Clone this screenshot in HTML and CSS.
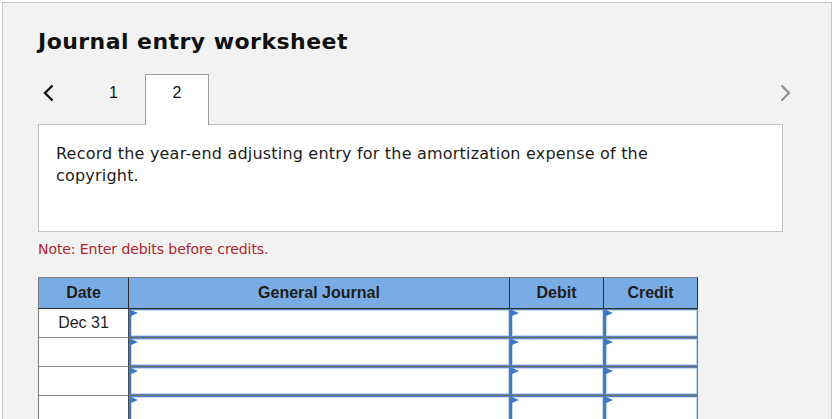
FILE: index.html
```html
<!DOCTYPE html>
<html>
<head>
<meta charset="utf-8">
<title>Journal entry worksheet</title>
<link rel="stylesheet" href="styles.css">
</head>
<body>
<div class="frame">
  <h1 class="title">Journal entry worksheet</h1>
  <div class="tabs">
    <div class="nav-prev">
      <svg width="12" height="18" viewBox="0 0 12 18"><path d="M10.5 1.5 L3 9 L10.5 16.5" fill="none" stroke="#111" stroke-width="2.4"/></svg>
    </div>
    <div class="tab">1</div>
    <div class="tab active">2</div>
    <div class="nav-next">
      <svg width="12" height="18" viewBox="0 0 12 18"><path d="M1.5 1.5 L9 9 L1.5 16.5" fill="none" stroke="#8a8a8a" stroke-width="2"/></svg>
    </div>
  </div>
  <div class="question">
    <p>Record the year-end adjusting entry for the amortization expense of the copyright.</p>
  </div>
  <div class="note">Note: Enter debits before credits.</div>
  <table class="journal">
    <thead>
      <tr>
        <th class="c-date">Date</th>
        <th class="c-gj">General Journal</th>
        <th class="c-dr">Debit</th>
        <th class="c-cr">Credit</th>
      </tr>
    </thead>
    <tbody>
      <tr>
        <td class="date">Dec 31</td>
        <td class="in"><div class="field"><span class="flag"></span></div></td>
        <td class="in"><div class="field"><span class="flag"></span></div></td>
        <td class="in"><div class="field"><span class="flag"></span></div></td>
      </tr>
      <tr>
        <td class="date"></td>
        <td class="in"><div class="field"><span class="flag"></span></div></td>
        <td class="in"><div class="field"><span class="flag"></span></div></td>
        <td class="in"><div class="field"><span class="flag"></span></div></td>
      </tr>
      <tr>
        <td class="date"></td>
        <td class="in"><div class="field"><span class="flag"></span></div></td>
        <td class="in"><div class="field"><span class="flag"></span></div></td>
        <td class="in"><div class="field"><span class="flag"></span></div></td>
      </tr>
      <tr>
        <td class="date"></td>
        <td class="in"><div class="field"><span class="flag"></span></div></td>
        <td class="in"><div class="field"><span class="flag"></span></div></td>
        <td class="in"><div class="field"><span class="flag"></span></div></td>
      </tr>
      <tr>
        <td class="date"></td>
        <td class="in"><div class="field"><span class="flag"></span></div></td>
        <td class="in"><div class="field"><span class="flag"></span></div></td>
        <td class="in"><div class="field"><span class="flag"></span></div></td>
      </tr>
    </tbody>
  </table>
</div>
</body>
</html>
```
FILE: styles.css
```css
html, body {
  margin: 0;
  padding: 0;
  background: #ffffff;
  overflow: hidden;
}

.frame {
  box-sizing: border-box;
  width: 830px;
  height: 520px;
  margin: 2px 0 0 2px;
  padding: 0 0 0 35px;
  border: 1px solid #c6c6c6;
  background: #f2f2f2;
  font-family: "DejaVu Sans", Verdana, sans-serif;
  color: #1c1c1c;
}

.title {
  margin: 0;
  padding-top: 26px;
  font-size: 22px;
  line-height: 26px;
  font-weight: bold;
  letter-spacing: 0.45px;
  color: #111;
}

.tabs {
  display: flex;
  width: 754px;
  height: 50px;
  margin-top: 19px;
  font-family: "Liberation Sans", Arial, sans-serif;
  font-size: 16px;
  line-height: 20px;
}

.nav-prev {
  width: 40px;
  padding: 10px 0 0 4px;
}

.nav-prev svg, .nav-next svg {
  display: block;
}

.tab {
  box-sizing: border-box;
  width: 63px;
  height: 51px;
  padding-top: 9px;
  text-align: center;
  color: #111;
}

.tab.active {
  width: 64px;
  border: 1px solid #9c9c9c;
  border-bottom: none;
  background: #ffffff;
  position: relative;
  padding-top: 8px;
}

.nav-next {
  margin-left: auto;
  padding-top: 10px;
}

.question {
  box-sizing: border-box;
  width: 745px;
  height: 108px;
  border: 1px solid #c2c2c2;
  background: #ffffff;
  padding: 18px 17px 0 17px;
}

.question p {
  margin: 0;
  max-width: 650px;
  font-size: 16px;
  line-height: 21.5px;
  letter-spacing: 0.2px;
}

.note {
  margin-top: 9px;
  font-size: 14px;
  line-height: 17px;
  letter-spacing: -0.08px;
  color: #b1242c;
}

.journal {
  margin-top: 19px;
  border-collapse: separate;
  border-spacing: 0;
  table-layout: fixed;
  width: 660px;
  font-family: "Liberation Sans", Arial, sans-serif;
  font-size: 16px;
}

.journal th {
  box-sizing: border-box;
  height: 32px;
  padding: 0;
  background: #79ace4;
  color: #1e1e1e;
  font-weight: bold;
  text-align: center;
  border-top: 1px solid #7a7a7a;
  border-right: 1px solid #2e2e2e;
  border-bottom: 1px solid #2e2e2e;
}

.journal th.c-date {
  width: 91px;
  border-left: 1px solid #7a7a7a;
}

.journal th.c-gj { width: 381px; }
.journal th.c-dr { width: 94px; }
.journal th.c-cr { width: 94px; }

.journal td {
  padding: 0;
  box-sizing: border-box;
  height: 29px;
}

.journal td.date {
  background: #ffffff;
  border-left: 1px solid #7a7a7a;
  border-right: 1px solid #4a4a4a;
  border-bottom: 1px solid #8a8a8a;
  text-align: center;
  color: #1e1e1e;
}

.journal td.in {
  border-bottom: 1px solid #6e6e6e;
  background: #6f93bf;
}

.field {
  box-sizing: border-box;
  position: relative;
  height: 28px;
  background: #ffffff;
  border-top: 1px solid #5a86bf;
  border-bottom: 1px solid #5a86bf;
  border-left: 2px solid #4579bd;
  border-right: 1px solid #4b7fc0;
  box-shadow: inset 0 0 0 1px #c3d8f1;
}

.flag {
  position: absolute;
  top: 0;
  left: 0;
  width: 0;
  height: 0;
  border-left: 7px solid #3d77c2;
  border-top: 3.5px solid transparent;
  border-bottom: 3.5px solid transparent;
}
```
